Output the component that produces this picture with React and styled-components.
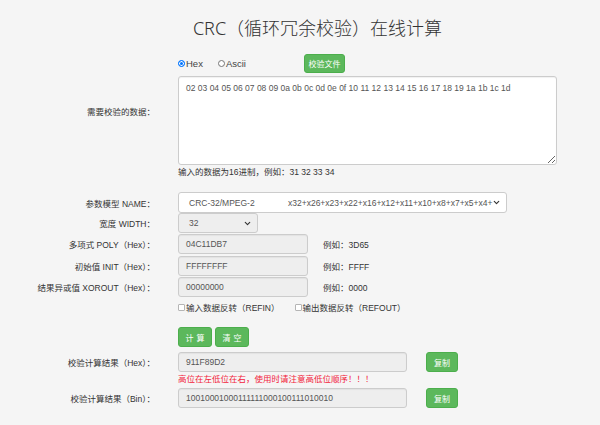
import { createGlobalStyle } from 'styled-components'
import styled from 'styled-components'
import { ChevronDown } from 'lucide-react'

const GlobalStyle = createGlobalStyle`
  html, body {
    margin: 0;
    padding: 0;
    background: #f5f5f5;
    font-family: "Liberation Sans", Arial, "Noto Sans CJK SC", sans-serif;
    color: #333;
  }
`

const Page = styled.div`
  width: 600px;
  height: 425px;
  overflow: hidden;
  padding-top: 16px;
  box-sizing: border-box;
`

const Title = styled.h1`
  margin: 0;
  padding-left: 35px;
  height: 24px;
  line-height: 24px;
  text-align: center;
  font-family: "Noto Sans", "Noto Sans CJK SC", sans-serif;
  font-size: 18px;
  font-weight: 300;
  color: #333;
`

const Row = styled.div`
  display: flex;
  align-items: ${(p) => p.$align || 'center'};
  margin-top: ${(p) => p.$top || 0}px;
  min-height: ${(p) => p.$height || 12}px;
`

const Label = styled.div`
  width: 155px;
  flex: none;
  text-align: right;
  font-size: 8.5px;
  color: #333;
  white-space: nowrap;
  padding-top: ${(p) => p.$pad || 0}px;
`

const Field = styled.div`
  margin-left: 23px;
  display: flex;
  align-items: center;
  gap: ${(p) => p.$gap || 0}px;
`

const RadioLabel = styled.label`
  display: flex;
  align-items: center;
  font-size: 9.5px;
  color: #444;
  margin-right: ${(p) => p.$mr || 0}px;
`

const Radio = styled.span`
  width: 7px;
  height: 7px;
  box-sizing: border-box;
  border-radius: 50%;
  border: 1px solid ${(p) => (p.$on ? '#0075ff' : '#767676')};
  background: ${(p) => (p.$on ? '#0075ff' : '#fff')};
  box-shadow: ${(p) => (p.$on ? 'inset 0 0 0 1px #fff' : 'none')};
  margin-right: 1px;
`

const Check = styled.span`
  width: 7px;
  height: 7px;
  box-sizing: border-box;
  border: 1px solid #b5b5b5;
  background: #fff;
  border-radius: 1px;
  margin-right: 1px;
`

const CheckLabel = styled.label`
  display: flex;
  align-items: center;
  font-size: 8.5px;
  color: #333;
  margin-right: ${(p) => p.$mr || 0}px;
`

const GreenButton = styled.button`
  height: ${(p) => p.$h || 20}px;
  width: ${(p) => p.$w}px;
  padding: 0;
  border: 1px solid #4cae4c;
  border-radius: 3px;
  background: #5cb85c;
  color: #fff;
  font-family: "Liberation Sans", "Noto Sans CJK SC", sans-serif;
  font-size: 8px;
  letter-spacing: ${(p) => p.$spacing || 0}px;
  text-indent: ${(p) => p.$spacing || 0}px;
  cursor: pointer;
`

const DataArea = styled.textarea`
  width: 379px;
  height: 89px;
  box-sizing: border-box;
  border: 1px solid #ccc;
  border-radius: 3px;
  background: #fff;
  padding: 5px 7px;
  font-family: "Liberation Sans", Arial, sans-serif;
  font-size: 8.5px;
  color: #555;
  line-height: 12px;
  outline: none;
  box-shadow: inset 0 1px 1px rgba(0, 0, 0, 0.06);
`

const Hint = styled.div`
  font-size: 8.5px;
  color: #333;
  line-height: 12px;
  white-space: nowrap;
`

const SelectBox = styled.div`
  width: ${(p) => p.$w}px;
  height: ${(p) => p.$h || 20}px;
  box-sizing: border-box;
  display: flex;
  align-items: center;
  padding: 0 5px 0 10px;
  border: 1px solid #ccc;
  border-radius: 3px;
  background: ${(p) => (p.$grey ? '#eee' : '#fff')};
  font-size: 8.5px;
  color: #555;
  white-space: nowrap;
  svg {
    margin-left: auto;
    flex: none;
    color: #333;
  }
`

const ModelName = styled.span`
  width: 99px;
  flex: none;
`

const TextBox = styled.div`
  width: ${(p) => p.$w}px;
  height: 20px;
  box-sizing: border-box;
  display: flex;
  align-items: center;
  padding-left: 7px;
  border: 1px solid #ccc;
  border-radius: 3px;
  background: #eee;
  font-size: 8.5px;
  color: #555;
  box-shadow: inset 0 1px 1px rgba(0, 0, 0, 0.05);
`

const Example = styled.span`
  margin-left: 15px;
  font-size: 8.5px;
  color: #333;
`

const Warning = styled.div`
  font-size: 8.5px;
  color: #f2233b;
  line-height: 12px;
  white-space: nowrap;
`

const ParamRow = ({ label, value, example, top }) => (
  <Row $top={top} $height={20}>
    <Label>{label}</Label>
    <Field>
      <TextBox $w={130}>{value}</TextBox>
      <Example>例如：{example}</Example>
    </Field>
  </Row>
)

const App = () => {
  return (
    <Page>
      <GlobalStyle />
      <Title>CRC（循环冗余校验）在线计算</Title>

      <Row $top={14} $height={18}>
        <Label />
        <Field>
          <RadioLabel $mr={15}>
            <Radio $on />
            Hex
          </RadioLabel>
          <RadioLabel $mr={58}>
            <Radio />
            Ascii
          </RadioLabel>
          <GreenButton $w={41} $h={19}>
            校验文件
          </GreenButton>
        </Field>
      </Row>

      <Row $top={3} $align="flex-start" $height={89}>
        <Label $pad={29}>需要校验的数据：</Label>
        <Field>
          <DataArea defaultValue="02 03 04 05 06 07 08 09 0a 0b 0c 0d 0e 0f 10 11 12 13 14 15 16 17 18 19 1a 1b 1c 1d" />
        </Field>
      </Row>

      <Row $top={1}>
        <Label />
        <Field>
          <Hint>输入的数据为16进制，例如：31 32 33 34</Hint>
        </Field>
      </Row>

      <Row $top={14} $height={21}>
        <Label>参数模型 NAME：</Label>
        <Field>
          <SelectBox $w={329} $h={21}>
            <ModelName>CRC-32/MPEG-2</ModelName>
            <span>x32+x26+x23+x22+x16+x12+x11+x10+x8+x7+x5+x4+</span>
            <ChevronDown size={9} strokeWidth={3} />
          </SelectBox>
        </Field>
      </Row>

      <Row $height={20}>
        <Label>宽度 WIDTH：</Label>
        <Field>
          <SelectBox $w={80} $grey>
            32
            <ChevronDown size={9} strokeWidth={3} />
          </SelectBox>
        </Field>
      </Row>

      <ParamRow top={1} label="多项式 POLY（Hex）：" value="04C11DB7" example="3D65" />
      <ParamRow top={2} label="初始值 INIT（Hex）：" value="FFFFFFFF" example="FFFF" />
      <ParamRow top={1} label="结果异或值 XOROUT（Hex）：" value="00000000" example="0000" />

      <Row $top={4}>
        <Label />
        <Field>
          <CheckLabel $mr={15}>
            <Check />
            输入数据反转（REFIN）
          </CheckLabel>
          <CheckLabel>
            <Check />
            输出数据反转（REFOUT）
          </CheckLabel>
        </Field>
      </Row>

      <Row $top={14} $height={20}>
        <Label />
        <Field $gap={3}>
          <GreenButton $w={34} $spacing={3}>
            计算
          </GreenButton>
          <GreenButton $w={34} $spacing={3}>
            清空
          </GreenButton>
        </Field>
      </Row>

      <Row $top={5} $height={20}>
        <Label>校验计算结果（Hex）：</Label>
        <Field $gap={19}>
          <TextBox $w={229}>911F89D2</TextBox>
          <GreenButton $w={32}>复制</GreenButton>
        </Field>
      </Row>

      <Row $top={1}>
        <Label />
        <Field>
          <Warning>高位在左低位在右，使用时请注意高低位顺序！！！</Warning>
        </Field>
      </Row>

      <Row $top={3} $height={20}>
        <Label>校验计算结果（Bin）：</Label>
        <Field $gap={19}>
          <TextBox $w={229}>10010001000111111000100111010010</TextBox>
          <GreenButton $w={32}>复制</GreenButton>
        </Field>
      </Row>
    </Page>
  )
}

export default App
